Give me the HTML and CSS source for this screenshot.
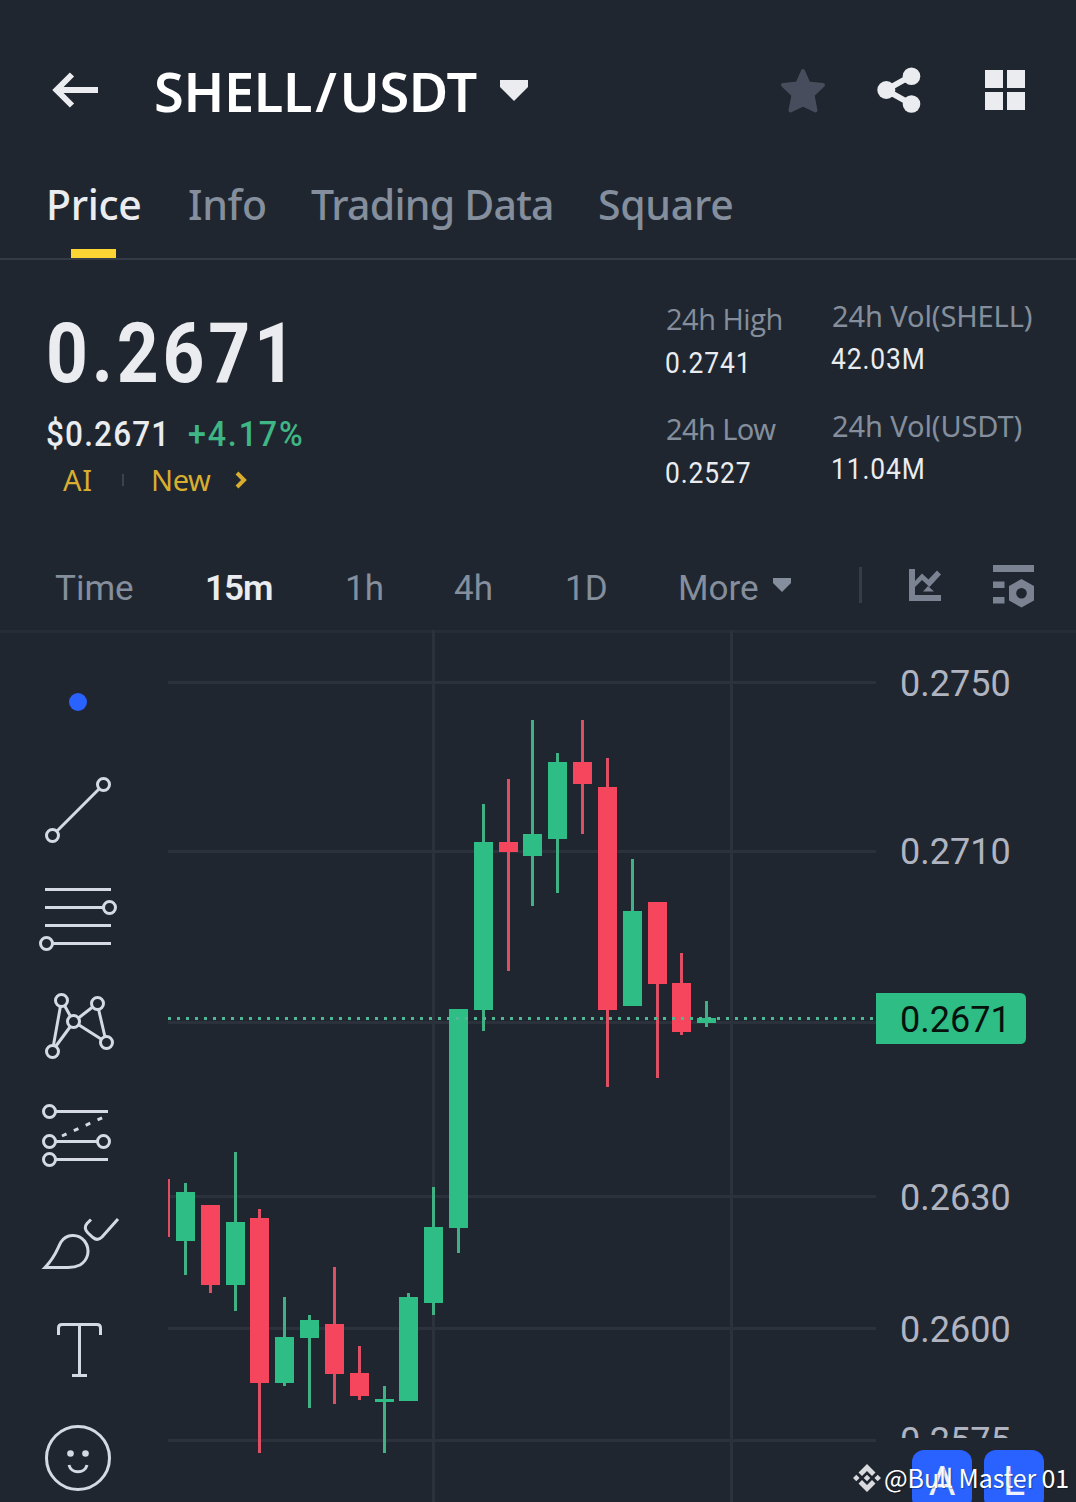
FILE: index.html
```html
<!DOCTYPE html>
<html lang="en">
<head>
<meta charset="utf-8">
<title>SHELL/USDT</title>
<link rel="stylesheet" href="styles.css">
</head>
<body>
<div class="app">
  <header class="header">
    <svg class="back" width="46" height="36" viewBox="0 0 46 36"><path d="M20 2.500L4.500 18L20 33.500M5 18H46" fill="none" stroke="#eaecef" stroke-width="6"/></svg>
    <h1 class="pair">SHELL<span class="pair-slash">/</span>USDT</h1>
    <svg class="pair-caret" width="28" height="22" viewBox="0 0 28 22"><path d="M0 0H28V7L14 21L0 7Z" fill="#eaecef"/></svg>
    <div class="actions">
      <svg width="46" height="46" viewBox="0 0 46 46"><path d="M23 3L28.500 15.500L43 17L32.500 27L35.500 42.500L23 36.500L10.500 42.500L13.500 27L3 17L17.500 15.500Z" fill="#474d5c" stroke="#474d5c" stroke-width="4" stroke-linejoin="round"/></svg>
      <svg width="44" height="46" viewBox="0 0 44 46"><path d="M34 9L9 23L34 37" fill="none" stroke="#eaecef" stroke-width="6"/><g fill="#eaecef"><circle cx="34.500" cy="9.300" r="8.800"/><circle cx="9.300" cy="23" r="9"/><circle cx="34.500" cy="37" r="8.800"/></g></svg>
      <svg width="40" height="40" viewBox="0 0 40 40"><path d="M0 0H18V18H0ZM22 0H40V18H22ZM0 22H18V40H0ZM22 22H40V40H22Z" fill="#eaecef"/></svg>
    </div>
  </header>

  <nav class="tabs">
    <a class="tab tab-active">Price</a>
    <a class="tab">Info</a>
    <a class="tab tab-wide">Trading Data</a>
    <a class="tab tab-square">Square</a>
  </nav>

  <section class="summary">
    <div class="quote">
      <div class="last">0.2671</div>
      <div class="fiat"><span class="fiat-price">$0.2671</span><span class="change">+4.17%</span></div>
      <div class="tags">
        <span class="tag-ai">AI</span><i class="tag-rule"></i><span class="tag-new">New</span>
        <svg width="12" height="18" viewBox="0 0 12 18"><path d="M2 2L9 9L2 16" fill="none" stroke="#d9ae2f" stroke-width="4"/></svg>
      </div>
    </div>
    <dl class="stats">
      <div class="stat"><dt class="l-high">24h High</dt><dd>0.2741</dd></div>
      <div class="stat"><dt class="l-low">24h Low</dt><dd>0.2527</dd></div>
    </dl>
    <dl class="stats stats-vol">
      <div class="stat"><dt>24h Vol(SHELL)</dt><dd>42.03M</dd></div>
      <div class="stat"><dt>24h Vol(USDT)</dt><dd>11.04M</dd></div>
    </dl>
  </section>

  <nav class="intervals">
    <a class="interval">Time</a>
    <a class="interval interval-active">15m</a>
    <a class="interval">1h</a>
    <a class="interval">4h</a>
    <a class="interval">1D</a>
    <a class="interval">More</a>
    <svg class="more-caret" width="18" height="14" viewBox="0 0 18 14"><path d="M0 0H18V5L9 14L0 5Z" fill="#848e9c"/></svg>
    <i class="interval-rule"></i>
    <svg width="32" height="32" viewBox="0 0 32 32"><g fill="#7b8292"><path d="M0 0H6V26H32V32H0Z"/><path d="M6 12L13 4.500L19.500 10.500L28 1.500L32 5.500L20.500 18L13 11L6 18Z"/><path d="M14 22.500L19 17L25 22.500Z"/></g></svg>
    <svg class="settings" width="42" height="43" viewBox="0 0 42 43"><g fill="#7b8292"><path d="M0 0H41V7H0ZM0 16.500H11.500V23H0ZM0 32H11.500V38.500H0Z"/><path fill-rule="evenodd" d="M28.500 14L41 21V35.500L28.500 42.500L16 35.500V21ZM28.500 23A5.300 5.300 0 1 0 28.500 33.600A5.300 5.300 0 1 0 28.500 23Z"/></g></svg>
  </nav>

  <main class="chart-area">
    <div class="tools">
      <svg width="168" height="108" viewBox="0 648 168 108"><circle cx="78" cy="702" r="9" fill="#2962ff"/></svg>
      <svg class="tool" width="168" height="108" viewBox="0 756 168 108"><path d="M57 831L99 789"/><circle cx="52.500" cy="835.500" r="6"/><circle cx="103.500" cy="784.500" r="6"/></svg>
      <svg class="tool" width="168" height="108" viewBox="0 864 168 108"><path d="M45 889.500H111M45 907.500H103M45 925.500H111M53 943.500H111"/><circle cx="109.500" cy="907.500" r="6"/><circle cx="46.500" cy="943.500" r="6"/></svg>
      <svg class="tool" width="168" height="108" viewBox="0 972 168 108"><path d="M60.500 1006L53.500 1045M56 1046L70 1027M64.500 1005.500L70 1015.500M78.500 1018L92 1007.500M98.500 1009L105 1037M79 1025L101 1039"/><circle cx="61.500" cy="1000.500" r="6"/><circle cx="97.500" cy="1003.500" r="6"/><circle cx="73.500" cy="1021.500" r="6"/><circle cx="52.500" cy="1051.500" r="6"/><circle cx="106.500" cy="1042.500" r="6"/></svg>
      <svg class="tool" width="168" height="108" viewBox="0 1080 168 108"><path d="M56 1111.500H108M56 1141.500H97M56 1159.500H108"/><path d="M62 1136L104 1117" stroke-dasharray="5 8"/><circle cx="49.500" cy="1111.500" r="6"/><circle cx="49.500" cy="1141.500" r="6"/><circle cx="103.500" cy="1141.500" r="6"/><circle cx="49.500" cy="1159.500" r="6"/></svg>
      <svg class="tool" width="168" height="108" viewBox="0 1188 168 108"><path d="M45 1267.500C56 1256 57 1249 61 1242C66 1234 78 1233 84.500 1241C91 1250 88 1260 80 1265C76 1267 73 1267.500 68 1267.500Z"/><path d="M91 1219.500L87 1223.500C84 1227 85 1230 88 1233L93 1237.500C96 1240 99 1240 102 1237L118 1219"/></svg>
      <svg class="tool" width="168" height="108" viewBox="0 1296 168 108"><path d="M58.500 1335V1328Q58.500 1324.500 62 1324.500H97Q100.500 1324.500 100.500 1328V1335M79.500 1324.500V1375M72 1375.500H87"/></svg>
      <svg class="tool" width="168" height="98" viewBox="0 1404 168 98"><circle cx="78" cy="1458" r="31.500"/><path d="M69 1465C71 1474 85 1474 87 1465"/><g fill="#d5d9e3" stroke="none"><circle cx="70.500" cy="1453.500" r="3.300"/><circle cx="85.500" cy="1453.500" r="3.300"/></g></svg>
    </div>
    <svg class="chart" width="908" height="872" viewBox="168 630 908 872">
      <defs><clipPath id="axis-clip"><rect x="880" y="630" width="196" height="808"/></clipPath></defs>
      <g class="grid">
        <path d="M168 682.500H876M168 851.500H876M168 1022.500H876M168 1196.500H876M168 1328.500H876M168 1440.500H876"/>
        <path d="M433.500 630V1502M731.500 630V1502"/>
      </g>
      <path class="wick up" d="M185.500 1183V1275M235.500 1152V1311M284.500 1297V1386M309.500 1315V1408M384.500 1386V1453M408.500 1293V1401M433.500 1187V1315M458.500 1009V1253M483.500 804V1031M532.500 720V906M557.500 753V893M632.500 859V1006M706.500 1001V1027"/>
      <path class="wick down" d="M168.500 1179V1237M210.500 1205V1293M259.500 1209V1453M334.500 1267V1404M359.500 1346V1400M508.500 779V971M582.500 720V834M607.500 758V1087M657.500 902V1078M681.500 953V1035"/>
      <path class="body up" d="M185.500 1192V1241M235.500 1222V1285M284.500 1337V1383M309.500 1320V1338M384.500 1399V1402M408.500 1297V1401M433.500 1227V1303M458.500 1009V1228M483.500 842V1010M532.500 834V856M557.500 762V839M632.500 911V1006M706.500 1018V1023"/>
      <path class="body down" d="M210.500 1205V1285M259.500 1218V1383M334.500 1324V1374M359.500 1373V1396M508.500 842V852M582.500 762V784M607.500 787V1010M657.500 902V984M681.500 983V1032"/>
      <path class="last-line" d="M168 1018.500H876"/>
      <g class="axis" clip-path="url(#axis-clip)">
        <text x="900" y="696">0.2750</text>
        <text x="900" y="864">0.2710</text>
        <text x="900" y="1210">0.2630</text>
        <text x="900" y="1342">0.2600</text>
        <text x="900" y="1453">0.2575</text>
      </g>
      <path d="M876 993H1020Q1026 993 1026 999V1038Q1026 1044 1020 1044H876Z" fill="#2ebd85"/>
      <text class="last-label" x="900" y="1032">0.2671</text>
    </svg>
    <div class="scale-buttons"><span class="scale-button">A</span><span class="scale-button">L</span></div>
    <div class="watermark">
      <svg width="28" height="28" viewBox="0 0 28 28"><g fill="#d9dade"><path d="M14 0L22.500 8.500L19 12L14 7L9 12L5.500 8.500ZM14 28L22.500 19.500L19 16L14 21L9 16L5.500 19.500ZM14 10.700L17.300 14L14 17.300L10.700 14ZM3.300 10.700L6.600 14L3.300 17.300L0 14ZM24.700 10.700L28 14L24.700 17.300L21.400 14Z"/></g></svg>
      <span>@Bull Master 01</span>
    </div>
  </main>
</div>
</body>
</html>
```
FILE: styles.css
```css
* { box-sizing: border-box; }
body { margin: 0; background: #1f262f; }
.app {
  width: 1076px; height: 1502px; overflow: hidden;
  display: flex; flex-direction: column;
  background: #1f262f; color: #eaecef;
  font-family: "Noto Sans", sans-serif; white-space: nowrap;
}
svg { display: block; flex: none; }

.header { height: 180px; padding: 0 51px 0 52px; display: flex; align-items: center; }
.pair { margin: 2px 0 0 56px; width: 346px; font-size: 54px; line-height: 60px; font-weight: 600; color: #fff; letter-spacing: -0.3px; }
.pair-slash { padding: 0 3px; }
.pair-caret { margin-top: 2px; }
.actions { margin-left: auto; display: flex; align-items: center; }
.actions svg:nth-child(1) { margin-right: 51px; margin-top: 2px; }
.actions svg:nth-child(2) { margin-right: 64px; }

.tabs {
  height: 80px; padding-left: 46px; border-bottom: 2px solid #333b47;
  display: grid; grid-template-columns: 142px 123px 287px 200px;
  font-size: 41px; line-height: 49px; font-weight: 500; letter-spacing: -0.3px; color: #848e9c;
}
.tab-active { color: #eaecef; display: flex; flex-direction: column; justify-content: space-between; }
.tab-active::after { content: ""; width: 45px; height: 9px; margin-left: 25px; background: #fcd535; }
.tab-wide { letter-spacing: -0.75px; }

.summary { height: 280px; display: grid; grid-template-columns: 619px 166px 244px; padding-left: 47px; }
.quote { padding-top: 50px; }

/* Figures are set narrower than the text face, with open spacing. */
.last, .fiat-price, .change, .stat dd { transform-origin: left center; }
.last { margin-left: -1px; font: 700 84px/88px Roboto, sans-serif; letter-spacing: 4.4px; transform: scaleX(0.87); }
.fiat { margin: 15px 0 0 -1px; display: flex; font: 500 35px/44px Roboto, sans-serif; }
.fiat-price { width: 142px; letter-spacing: 1.3px; transform: scaleX(0.9); }
.change { color: #3fb685; letter-spacing: 2px; transform: scaleX(0.92); }
.tags { margin-top: 1px; padding-left: 16px; height: 44px; display: flex; align-items: center; font-size: 29px; line-height: 44px; color: #d9ae2f; }
.tag-ai { width: 59px; letter-spacing: 0.8px; }
.tag-rule { width: 2px; height: 12px; background: #3b434f; }
.tag-new { margin-left: 27px; width: 84px; letter-spacing: -0.4px; }
.stats { margin: 0; padding-top: 37px; display: flex; flex-direction: column; gap: 24px; }
.stats-vol { padding-top: 34px; }
.stat dt { font-size: 29px; line-height: 43px; letter-spacing: -0.1px; color: #848e9c; }
.stat dd { margin: 0 0 0 -1px; font: 400 30px/43px Roboto, sans-serif; letter-spacing: 1px; transform: scaleX(0.88); }
.stats:not(.stats-vol) dd { padding-top: 1px; margin-bottom: -1px; }
.stat .l-high { font-family: "Open Sans", sans-serif; letter-spacing: -0.5px; }
.stat .l-low { letter-spacing: -0.6px; }

.intervals {
  height: 93px; padding: 0 41px 0 55px; border-bottom: 3px solid #262d37;
  display: grid; grid-template-columns: 150px 140px 109px 111px 113px 95px 86px 50px 84px 42px;
  align-items: center; font: 400 35px/44px Roboto, sans-serif; color: #848e9c;
}
.interval { padding-top: 7px; }
.interval-active { color: #eaecef; font-weight: 600; letter-spacing: -1px; }
.interval-rule { width: 3px; height: 36px; background: #353d48; }
.settings { margin-top: 2px; }

.chart-area { position: relative; height: 872px; margin-top: -3px; display: grid; grid-template-columns: 168px 908px; }
.tools { padding-top: 18px; }
.tool { fill: none; stroke: #d5d9e3; stroke-width: 3; }
.grid path { fill: none; stroke: #2b323c; stroke-width: 3; }
.wick { fill: none; stroke-width: 3; }
.body { fill: none; stroke-width: 19; }
.up { stroke: #2ebd85; }
.down { stroke: #f6465d; }
.wick.up { stroke: #3fb184; }
.wick.down { stroke: #dd5064; }
.last-line { stroke: #4fb894; stroke-width: 3; stroke-dasharray: 3 6; }
.axis, .last-label { font-family: Roboto, sans-serif; font-size: 36px; fill: #b0b4c0; }
.last-label { fill: #07120d; }

.scale-buttons { position: absolute; left: 912px; top: 820px; display: flex; gap: 12px; }
.scale-button {
  width: 60px; height: 60px; border-radius: 12px; background: #2962ff; color: #eef1fb;
  font: 400 41px/62px Roboto, sans-serif; text-align: center;
}
.watermark {
  position: absolute; left: 853px; top: 829px; display: flex; align-items: center; gap: 3px;
  font: 400 25px/36px "Noto Sans CJK SC", sans-serif; letter-spacing: -0.1px; color: #fff;
  text-shadow: 1px 1px 1px rgba(0, 0, 0, 0.35);
}
.watermark svg { margin-top: 2px; }
```
